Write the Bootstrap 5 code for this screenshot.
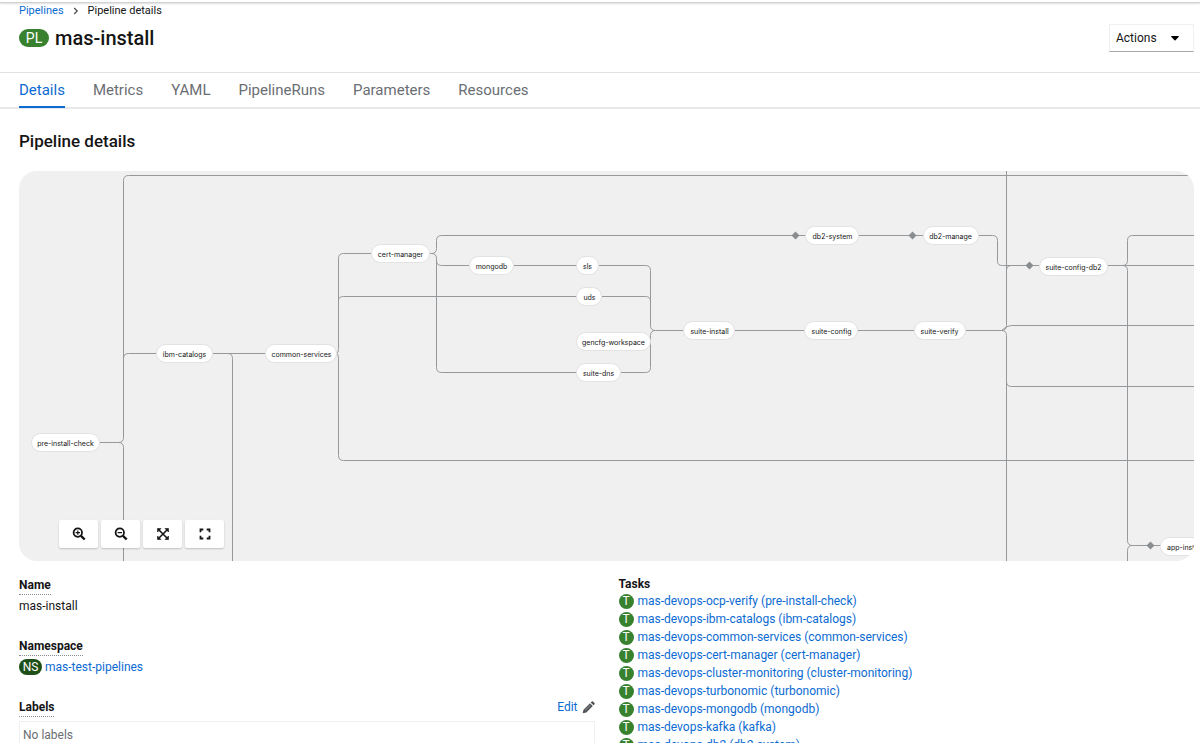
<!DOCTYPE html>
<html lang="en">
<head>
<meta charset="utf-8">
<meta name="viewport" content="width=device-width, initial-scale=1">
<title>mas-install · Pipeline details</title>
<link href="https://cdn.jsdelivr.net/npm/bootstrap@5.3.0/dist/css/bootstrap.min.css" rel="stylesheet">
<style>
  :root { --link: #0c6bd2; --ink: #151515; --muted: #6a6e73; --line: #e1e1e1; }
  body { font-family: Roboto, "Liberation Sans", sans-serif; font-size: 12px; line-height: 18px; color: var(--ink); background: #fff; }
  a { color: var(--link); text-decoration: none; }
  a:hover { text-decoration: underline; }
  .masthead-edge { height: 3px; border-bottom: 1px solid #d2d2d2; box-shadow: 0 1px 2px #0002; }
  .gutters { padding-left: 19px; padding-right: 6px; }
  .crumbs { --bs-breadcrumb-margin-bottom: 0; font-size: 11px; line-height: 15px; }
  .crumbs svg { margin: 0 9px; }
  .title-row { height: 54px; padding-top: 6px; }
  h1 { font-size: 20px; line-height: 28px; font-weight: 500; }
  h2 { font-size: 17px; line-height: 24px; font-weight: 500; }
  .pipeline-heading { padding: 20px 0 18px; }
  .kind { display: inline-block; border-radius: 20px; background: #38812f; color: #fff; text-align: center; }
  .kind-pl { font-size: 14px; line-height: 18px; width: 30px; margin-right: 6px; font-weight: 400; }
  .kind-ns { font-size: 12px; line-height: 16px; width: 23px; margin-right: 3px; background: #1e4f18; }
  .kind-t { font-size: 12px; line-height: 15px; width: 15px; }
  .actions { width: 85px; height: 28px; padding: 0 14px 0 6px; font-size: 12px; color: var(--ink); background: #fff; border: 1px solid #f0f0f0; border-bottom-color: #a5a7a9; border-radius: 0; }
  .tabs { --bs-nav-link-color: var(--muted); gap: 28px; border-top: 1px solid var(--line); border-bottom: 2px solid #e8e8e8; }
  .tabs .nav-link { padding: 8px 0 7px; font-size: 15px; line-height: 18px; border-bottom: 2px solid transparent; margin-bottom: -1px; }
  .tabs .nav-link.active { color: var(--link); border-bottom-color: var(--link); }
  .canvas { height: 390px; background: #f0f0f0; border-radius: 18px; overflow: hidden; }
  .edges { fill: none; stroke: #96999c; }
  .diamonds { fill: #8a8d90; }
  .nodes rect { fill: #fff; stroke: #e2e2e2; }
  .nodes text { font-family: Inter, "Liberation Sans", sans-serif; font-size: 7px; text-anchor: middle; fill: var(--ink); }
  .zoombar { left: 40px; bottom: 13px; gap: 3px; }
  .zoombar button { width: 39px; height: 28px; padding: 0 0 2px; background: #fff; border: 0; border-radius: 2px; box-shadow: 0 1px 2px #0003; }
  .details { padding-top: 14px; }
  dt { font-weight: 700; }
  dd { margin-bottom: 22px; }
  .facts { padding-top: 1px; }
  .facts dt { height: 21px; }
  .facts dt span { display: inline-block; border-bottom: 1px dotted #8a8d90; }
  .facts .label-box { margin-top: 2px; border: 1px solid #f0f0f0; padding: 4px 3px; height: 60px; color: var(--muted); }
  .tasks { margin-top: -1px; }
  .tasks li { gap: 4px; }
</style>
</head>
<body>
<div class="vh-100 overflow-hidden">
  <div class="masthead-edge"></div>
  <header>
    <div class="gutters">
      <nav aria-label="breadcrumb">
        <ol class="breadcrumb crumbs align-items-center">
          <li><a href="#">Pipelines</a></li>
          <li class="d-flex align-items-center" aria-current="page"><svg width="6" height="8" viewBox="0 0 6 8" fill="none" stroke="#4f5255" stroke-width="1.3"><path d="M1.2 1l3 3-3 3"/></svg>Pipeline details</li>
        </ol>
      </nav>
      <div class="title-row d-flex justify-content-between align-items-start">
        <h1 class="d-flex align-items-center m-0"><span class="kind kind-pl">PL</span>mas-install</h1>
        <button type="button" class="actions d-flex align-items-center justify-content-between">Actions <svg width="8" height="5" viewBox="0 0 8 5"><path d="M.6 0h6.800q.8.1.2.9L4.500 4.300q-.5.500-1 0L.4.9Q-.2.100.6 0z"/></svg></button>
      </div>
    </div>
    <ul class="nav tabs gutters">
      <li class="nav-item"><a class="nav-link active" aria-current="page" href="#">Details</a></li>
      <li class="nav-item"><a class="nav-link" href="#">Metrics</a></li>
      <li class="nav-item"><a class="nav-link" href="#">YAML</a></li>
      <li class="nav-item"><a class="nav-link" href="#">PipelineRuns</a></li>
      <li class="nav-item"><a class="nav-link" href="#">Parameters</a></li>
      <li class="nav-item"><a class="nav-link" href="#">Resources</a></li>
    </ul>
  </header>

  <main class="gutters">
    <h2 class="mb-0 pipeline-heading">Pipeline details</h2>
    <div class="canvas position-relative">
      <svg class="d-block" width="100%" height="100%" role="img" aria-label="Pipeline graph">
        <g transform="translate(-18.500 -170.500)">
          <g class="edges">
            <path d="M99 442H118Q123 442 123 437V180Q123 175 128 175H1210"/>
            <path d="M118 442Q123 442 123 447V570M123 360V358Q123 353 128 353H156"/>
            <path d="M212 353H266M227 353Q232 353 232 358V570"/>
            <path d="M336 353Q338 353 338 348V258Q338 253 343 253H372M338 305V300Q338 296 343 296H577"/>
            <path d="M336 353Q338 353 338 358V455Q338 460 343 460H1210"/>
            <path d="M429 253H431Q436 253 436 248V240Q436 235 441 235H806M858 235H923"/>
            <path d="M431 253Q436 253 436 258V260Q436 265 441 265H469M436 258V367Q436 372 441 372H577"/>
            <path d="M513 265H577M598 265H645Q650 265 650 270V325Q650 330 655 330H684M601 296H645Q650 296 650 301"/>
            <path d="M620 372H645Q650 372 650 367V335Q650 330 655 330"/>
            <path d="M734 330H805M857 330H914M965 330H1001Q1006 330 1006 335V570M1001 330Q1006 330 1006 325V170"/>
            <path d="M978 235H992Q997 235 997 240V261Q997 265 1002 265H1039M1006 270Q1006 265 1011 265"/>
            <path d="M1001 330Q1006 325 1011 325H1210M1006 381Q1006 386 1011 386H1210"/>
            <path d="M1107 265H1210M1122 265Q1127 265 1127 260V240Q1127 235 1132 235H1210M1122 265Q1127 265 1127 270V540Q1127 545 1132 545H1161M1127 570V550Q1127 545 1132 545"/>
          </g>
          <g class="diamonds">
            <path id="when" d="M795 231l4 4-4 4-4-4z"/>
            <use href="#when" x="117"/><use href="#when" x="234" y="30"/><use href="#when" x="355" y="310"/>
          </g>
          <g class="nodes">
            <rect x="31" y="433" width="68" height="18" rx="9"/><text x="65" y="445">pre-install-check</text>
            <rect x="156" y="344" width="56" height="18" rx="9"/><text x="184" y="356">ibm-catalogs</text>
            <rect x="265" y="344" width="71" height="18" rx="9"/><text x="301" y="356">common-services</text>
            <rect x="371" y="244" width="58" height="18" rx="9"/><text x="400" y="256">cert-manager</text>
            <rect x="469" y="256" width="44" height="18" rx="9"/><text x="491" y="268">mongodb</text>
            <rect x="576" y="256" width="22" height="18" rx="9"/><text x="587" y="268">sls</text>
            <rect x="576" y="287" width="25" height="18" rx="9"/><text x="589" y="299">uds</text>
            <rect x="576" y="332" width="74" height="18" rx="9"/><text x="613" y="344">gencfg-workspace</text>
            <rect x="576" y="363" width="44" height="18" rx="9"/><text x="598" y="375">suite-dns</text>
            <rect x="683" y="321" width="51" height="18" rx="9"/><text x="709" y="333">suite-install</text>
            <rect x="804" y="321" width="53" height="18" rx="9"/><text x="831" y="333">suite-config</text>
            <rect x="914" y="321" width="51" height="18" rx="9"/><text x="939" y="333">suite-verify</text>
            <rect x="805" y="226" width="53" height="18" rx="9"/><text x="832" y="238">db2-system</text>
            <rect x="923" y="226" width="55" height="18" rx="9"/><text x="950" y="238">db2-manage</text>
            <rect x="1039" y="257" width="68" height="18" rx="9"/><text x="1073" y="269">suite-config-db2</text>
            <rect x="1160" y="537" width="47" height="18" rx="9"/><text x="1184" y="549">app-install</text>
          </g>
        </g>
      </svg>
      <div class="zoombar position-absolute d-flex">
        <button type="button" aria-label="Zoom in"><svg width="14" height="14" viewBox="0 0 14 14" fill="none" stroke="#151515" stroke-width="1.800"><circle cx="5.800" cy="5.600" r="4.200"/><path d="M9 8.800l3.700 3.700" stroke-width="2.400"/><path d="M3.600 5.600h4.400M5.800 3.400v4.400" stroke-width="1.200"/></svg></button>
        <button type="button" aria-label="Zoom out"><svg width="14" height="14" viewBox="0 0 14 14" fill="none" stroke="#151515" stroke-width="1.800"><circle cx="5.800" cy="5.600" r="4.200"/><path d="M9 8.800l3.700 3.700" stroke-width="2.400"/><path d="M3.600 5.600h4.400" stroke-width="1.200"/></svg></button>
        <button type="button" aria-label="Fit to screen"><svg width="12" height="12" viewBox="0 0 12 12"><path d="M.5.500h3.500L.5 4zM11.500.500v3.500l-3.500-3.500zM.5 11.500v-3.500l3.500 3.500zM11.500 11.500h-3.500l3.500-3.500z" fill="#151515" stroke="#151515" stroke-linejoin="round" stroke-width=".6"/><path d="M2 2l8 8M10 2l-8 8" stroke="#151515" stroke-width="1.600"/></svg></button>
        <button type="button" aria-label="Reset view"><svg width="12" height="12" viewBox="0 0 12 12" fill="none" stroke="#151515" stroke-width="1.800"><path d="M1.500 4.300V1.500h2.800M7.700 1.500h2.800v2.800M10.500 7.700v2.800H7.700M4.300 10.500H1.500V7.700"/></svg></button>
      </div>
    </div>

    <div class="row gx-4 details">
      <div class="col-6">
        <dl class="facts mb-0">
          <dt><span>Name</span></dt>
          <dd>mas-install</dd>
          <dt><span>Namespace</span></dt>
          <dd class="d-flex align-items-center"><span class="kind kind-ns">NS</span><a href="#">mas-test-pipelines</a></dd>
          <dt class="d-flex justify-content-between align-items-start"><span>Labels</span><a class="fw-normal d-flex align-items-center gap-1" href="#">Edit <svg width="13" height="13" viewBox="0 0 13 13" fill="#4f5255"><path d="M.7 12.300l.8-3.600L8 2.200l2.800 2.800-6.500 6.500zM8.700 1.500L9.800.500q.6-.5 1.200 0l1.500 1.500q.5.600 0 1.200l-1 1.100z"/><path d="M3 9.500l5.700-5.600" stroke="#ccc" stroke-width=".6"/></svg></a></dt>
          <dd class="label-box">No labels</dd>
        </dl>
      </div>
      <div class="col-6">
        <dl class="mb-0">
          <dt>Tasks</dt>
          <dd>
            <ul class="tasks list-unstyled">
              <li class="d-flex align-items-center"><span class="kind kind-t">T</span><a href="#">mas-devops-ocp-verify (pre-install-check)</a></li>
              <li class="d-flex align-items-center"><span class="kind kind-t">T</span><a href="#">mas-devops-ibm-catalogs (ibm-catalogs)</a></li>
              <li class="d-flex align-items-center"><span class="kind kind-t">T</span><a href="#">mas-devops-common-services (common-services)</a></li>
              <li class="d-flex align-items-center"><span class="kind kind-t">T</span><a href="#">mas-devops-cert-manager (cert-manager)</a></li>
              <li class="d-flex align-items-center"><span class="kind kind-t">T</span><a href="#">mas-devops-cluster-monitoring (cluster-monitoring)</a></li>
              <li class="d-flex align-items-center"><span class="kind kind-t">T</span><a href="#">mas-devops-turbonomic (turbonomic)</a></li>
              <li class="d-flex align-items-center"><span class="kind kind-t">T</span><a href="#">mas-devops-mongodb (mongodb)</a></li>
              <li class="d-flex align-items-center"><span class="kind kind-t">T</span><a href="#">mas-devops-kafka (kafka)</a></li>
              <li class="d-flex align-items-center"><span class="kind kind-t">T</span><a href="#">mas-devops-db2 (db2-system)</a></li>
            </ul>
          </dd>
        </dl>
      </div>
    </div>
  </main>
</div>
<script src="https://cdn.jsdelivr.net/npm/bootstrap@5.3.0/dist/js/bootstrap.bundle.min.js"></script>
</body>
</html>
